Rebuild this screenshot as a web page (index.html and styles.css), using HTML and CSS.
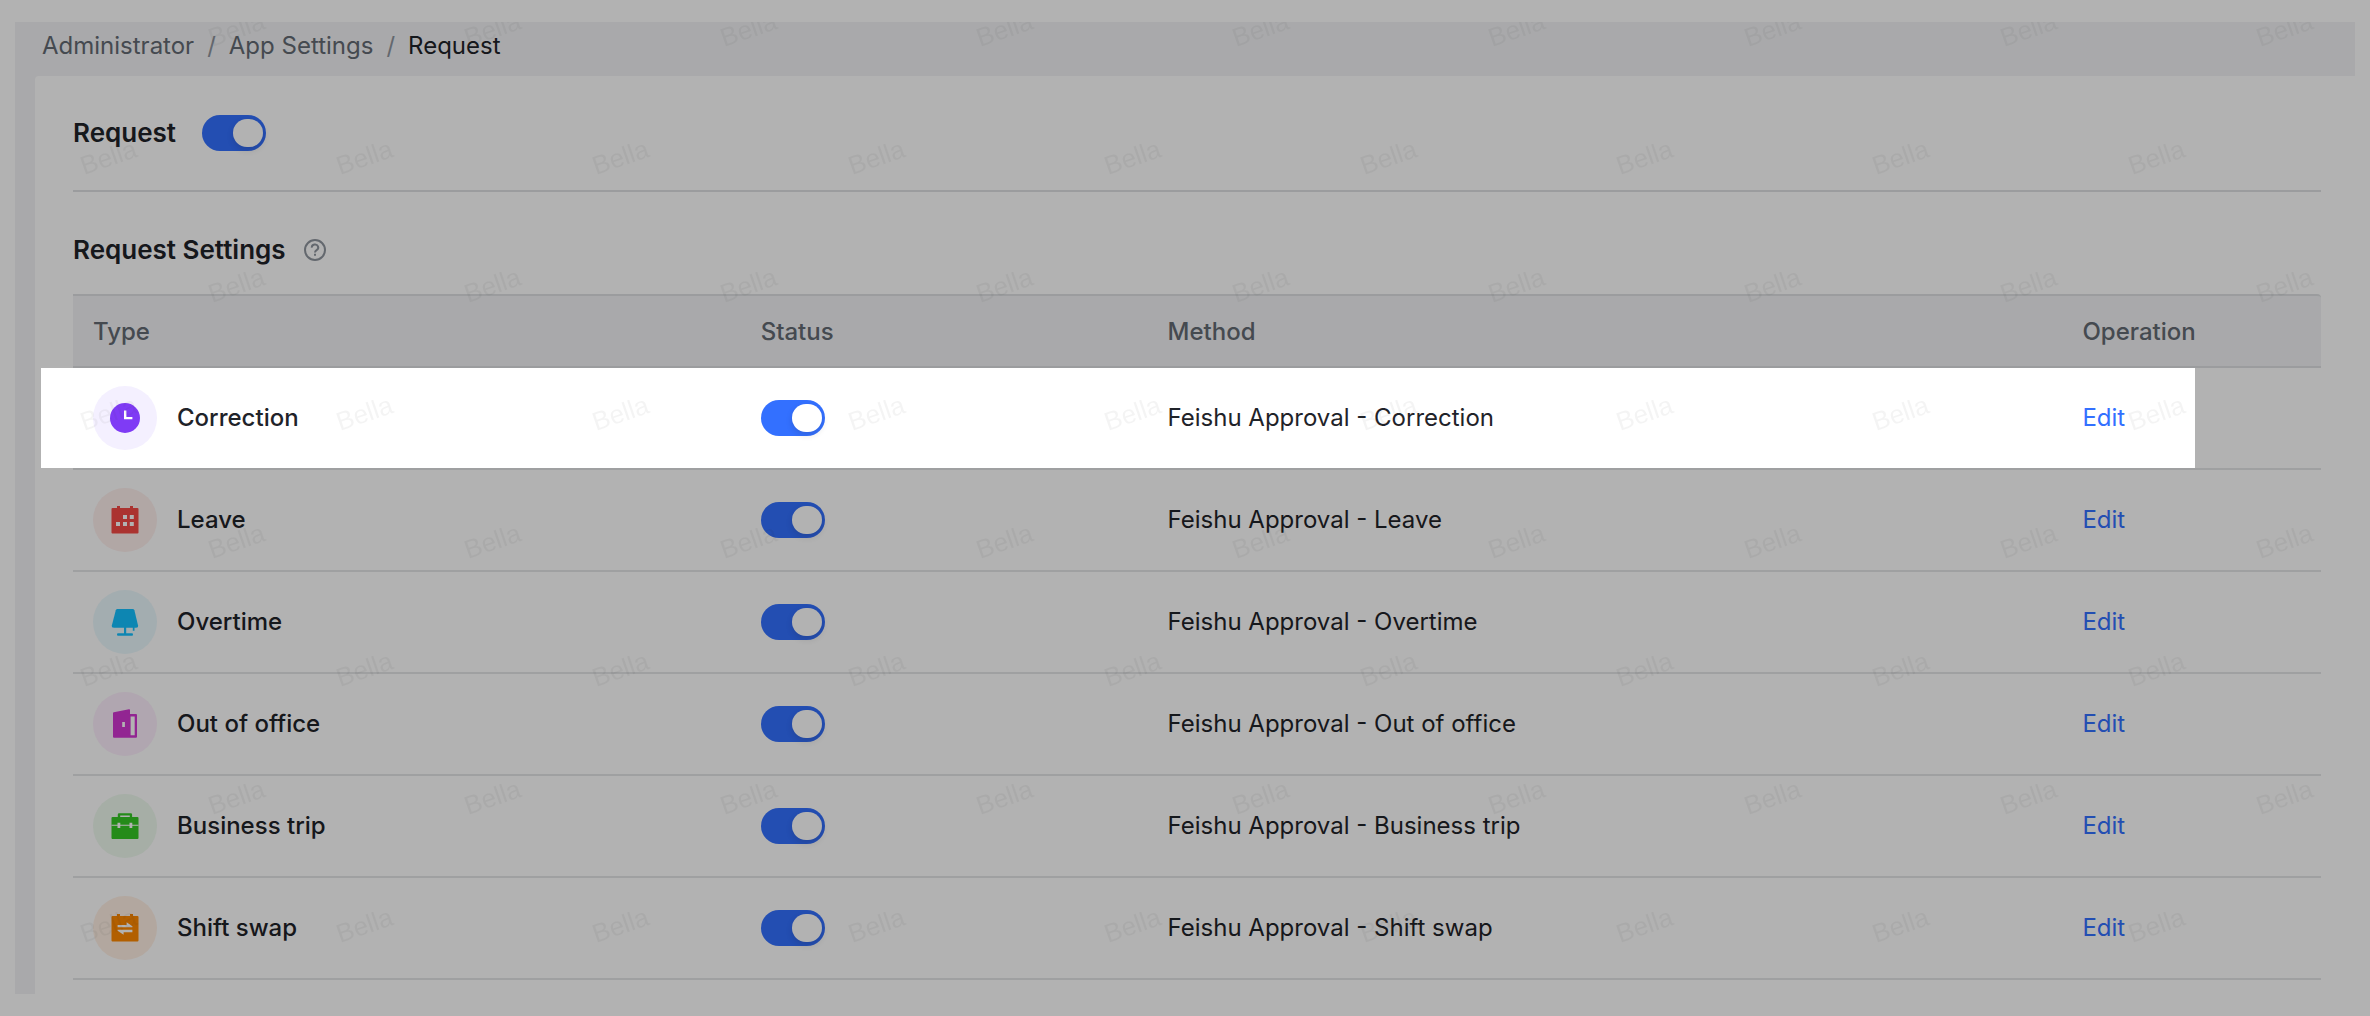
FILE: index.html
```
<!DOCTYPE html>
<html lang="en">
<head>
  <meta charset="UTF-8">
  <meta name="viewport" content="width=device-width, initial-scale=1.0">
  <title>Request</title>
  <link rel="stylesheet" href="styles.css">
</head>
<body>
  <div class="app">
    <nav class="breadcrumb" aria-label="Breadcrumb">
      <a href="#">Administrator</a>
      <span class="separator">/</span>
      <a href="#">App Settings</a>
      <span class="separator">/</span>
      <span class="current">Request</span>
    </nav>

    <main class="panel">
      <div class="request-header">
        <label class="title" for="requestSwitch">Request</label>
        <input class="switch" id="requestSwitch" type="checkbox" role="switch" checked>
      </div>

      <div class="settings-header">
        <h2 class="title">Request Settings</h2>
        <button class="help" type="button" aria-label="Help">
          <svg width="22" height="22" viewBox="0 0 22 22" fill="none" stroke="currentColor" stroke-width="2">
            <circle cx="11" cy="11" r="10"/>
            <path d="M7.800 8.600a3.200 3 0 1 1 4.800 2.500c-1.100.7-1.600 1.100-1.600 2.300"/>
            <path d="M11 14.700v2"/>
          </svg>
        </button>
      </div>

      <table class="request-table">
        <thead>
          <tr>
            <th class="col-type">Type</th>
            <th class="col-status">Status</th>
            <th class="col-method">Method</th>
            <th>Operation</th>
          </tr>
        </thead>
        <tbody>
          <tr class="highlighted">
            <td>
              <label class="type" for="correction">
                <svg class="icon purple" viewBox="0 0 64 64">
                  <circle cx="32" cy="32" r="15"/>
                  <path class="cutout" d="M31 24.5h2.4v6.4h6v2.4H31z"/>
                </svg>
                Correction
              </label>
            </td>
            <td><input class="switch" id="correction" type="checkbox" role="switch" checked></td>
            <td>Feishu Approval - Correction</td>
            <td>
              <a href="#">Edit</a>
              <span class="spotlight"></span>
            </td>
          </tr>
          <tr>
            <td>
              <label class="type" for="leave">
                <svg class="icon red" viewBox="0 0 64 64">
                  <path d="M24 20v-2h3v2h10v-2h3v2h4.500a1 1 0 0 1 1 1v23.500a1 1 0 0 1-1 1h-25a1 1 0 0 1-1-1V21a1 1 0 0 1 1-1z"/>
                  <path class="cutout" d="M30 27h4v4h-4zM36.800 27h4v4h-4zM23 34h4v4h-4zM30 34h4v4h-4zM36.800 34h4v4h-4z"/>
                </svg>
                Leave
              </label>
            </td>
            <td><input class="switch" id="leave" type="checkbox" role="switch" checked></td>
            <td>Feishu Approval - Leave</td>
            <td><a href="#">Edit</a></td>
          </tr>
          <tr>
            <td>
              <label class="type" for="overtime">
                <svg class="icon cyan" viewBox="0 0 64 64">
                  <path d="M24.500 19h15.200q1.300 0 1.700 1.300l3.600 15q.5 2.500-2 2.500H21q-2.700 0-2.100-2.500l3.900-15Q23.200 19 24.500 19z"/>
                  <path d="M31 37h2.200v6.300H39q1 0 1 1.200t-1 1.200H25q-1 0-1-1.200t1-1.200h6zM39.800 37h1.700v3.700h-1.700z"/>
                </svg>
                Overtime
              </label>
            </td>
            <td><input class="switch" id="overtime" type="checkbox" role="switch" checked></td>
            <td>Feishu Approval - Overtime</td>
            <td><a href="#">Edit</a></td>
          </tr>
          <tr>
            <td>
              <label class="type" for="outOfOffice">
                <svg class="icon magenta" viewBox="0 0 64 64">
                  <path d="M20.800 20.200 36 17.200q1-.2 1 .8v4h6q1 0 1 1v21.700q0 1-1 1H21q-1 0-1-1V21.200q0-.9.800-1z"/>
                  <path class="cutout" d="M37.600 24.600h4.100v18.600h-4.100zM29.200 30h2.700v5h-2.700z"/>
                </svg>
                Out of office
              </label>
            </td>
            <td><input class="switch" id="outOfOffice" type="checkbox" role="switch" checked></td>
            <td>Feishu Approval - Out of office</td>
            <td><a href="#">Edit</a></td>
          </tr>
          <tr>
            <td>
              <label class="type" for="businessTrip">
                <svg class="icon green" viewBox="0 0 64 64">
                  <path d="M24.800 23v-2.500q0-1.300 1.300-1.300h11.700q1.300 0 1.300 1.300V23h5.400q1 0 1 1v20q0 1-1 1h-25q-1 0-1-1V24q0-1 1-1z"/>
                  <path class="cutout" d="M27.200 21.600h9.600V23h-9.600zM18.500 30.800h6v-2.100h2.800v2.100h9.200v-2.100h2.800v2.100h6.200v1h-6.200v2.300h-2.800v-2.300h-9.200v2.300h-2.800v-2.300h-6z"/>
                </svg>
                Business trip
              </label>
            </td>
            <td><input class="switch" id="businessTrip" type="checkbox" role="switch" checked></td>
            <td>Feishu Approval - Business trip</td>
            <td><a href="#">Edit</a></td>
          </tr>
          <tr>
            <td>
              <label class="type" for="shiftSwap">
                <svg class="icon orange" viewBox="0 0 64 64">
                  <path d="M24 20v-2h3v2h10v-2h3v2h4.500a1 1 0 0 1 1 1v23.500a1 1 0 0 1-1 1h-25a1 1 0 0 1-1-1V21a1 1 0 0 1 1-1z"/>
                  <path class="cutout" d="M24.600 29h9v-2.800l5.800 4v1.100H24.600zM39.400 36.200h-8.800v2.600l-6-4v-1h14.800z"/>
                </svg>
                Shift swap
              </label>
            </td>
            <td><input class="switch" id="shiftSwap" type="checkbox" role="switch" checked></td>
            <td>Feishu Approval - Shift swap</td>
            <td><a href="#">Edit</a></td>
          </tr>
        </tbody>
      </table>
    </main>

    <!-- User name watermark -->
    <svg class="watermark" aria-hidden="true">
      <defs>
        <!-- the second name crosses the tile's edge, so it is drawn at both ends -->
        <pattern id="watermarkTile" width="256" height="256" patternUnits="userSpaceOnUse">
          <text transform="translate(69 153) rotate(-19)">Bella</text>
          <text transform="translate(197 25) rotate(-19)">Bella</text>
          <text transform="translate(197 281) rotate(-19)">Bella</text>
        </pattern>
      </defs>
      <rect width="100%" height="100%" fill="url(#watermarkTile)"/>
    </svg>
  </div>
</body>
</html>
```
FILE: styles.css
```
* {
  box-sizing: border-box;
}
body {
  margin: 0;
  min-height: 100vh;
  padding: 22px 15px;
  display: flex;
  background: #ffffff;
  color: #1f2329;
  font-family: Inter, "Liberation Sans", sans-serif;
  font-size: 24px;
  line-height: 32px;
  overflow-x: hidden;
}
a {
  color: #3370ff;
  text-decoration: none;
}
.app {
  position: relative;
  flex: 1;
  display: flex;
  flex-direction: column;
  padding-left: 20px;
  background: #f2f3f5;
}
.breadcrumb {
  display: flex;
  gap: 13px;
  padding: 8px 7px 14px;
}
.breadcrumb a {
  color: #646a73;
}
.breadcrumb .separator {
  color: #8f959e;
}
.panel {
  flex: 1;
  padding: 0 34px 14px 38px;
  background: #ffffff;
  border-top-left-radius: 4px;
}
.title {
  margin: 0;
  font-size: 26px;
  font-weight: 600;
  line-height: 32px;
}
.request-header {
  display: flex;
  align-items: center;
  gap: 26px;
  height: 116px;
  border-bottom: 2px solid #dee0e3;
}
.settings-header {
  display: flex;
  align-items: center;
  gap: 18px;
  padding: 42px 0 28px;
}
.help {
  display: flex;
  padding: 0;
  border: none;
  background: none;
  color: #8f959e;
  cursor: pointer;
}
/* On/off switch */
.switch {
  appearance: none;
  display: flex;
  align-items: center;
  justify-content: flex-end;
  width: 64px;
  height: 36px;
  margin: 0;
  padding: 0 3px;
  border-radius: 18px;
  background: #3370ff;
  cursor: pointer;
}
.switch::before {
  content: "";
  width: 30px;
  height: 28px;
  border-radius: 14px;
  background: #ffffff;
  box-shadow: 0 3px 6px rgba(31, 35, 41, 0.15);
}
.switch:not(:checked) {
  justify-content: flex-start;
  background: #bbbfc4;
}
/* Request types */
.request-table {
  width: 100%;
  table-layout: fixed;
  border-spacing: 0;
}
.request-table th,
.request-table td {
  padding: 0 20px;
  border-bottom: 2px solid #e4e5e7;
  text-align: left;
}
.request-table th {
  height: 74px;
  padding-top: 2px;
  border-top: 2px solid #dee0e3;
  border-bottom-color: #dee0e3;
  background: #f2f3f5;
  color: #646a73;
  font-weight: 500;
}
.request-table th:last-child {
  border-top-right-radius: 4px;
}
.request-table td {
  height: 102px;
}
.col-type {
  width: 29.7%;
}
.col-status {
  width: 18.1%;
}
.col-method {
  width: 40.7%;
}
.type {
  display: flex;
  align-items: center;
  gap: 20px;
  font-weight: 500;
}
.icon {
  width: 64px;
  height: 64px;
  border-radius: 50%;
  fill: currentColor;
}
.icon .cutout {
  fill: #ffffff;
}
.purple {
  color: #7f3bf5;
  background: #f4f0ff;
}
.red {
  color: #f54a45;
  background: #feefed;
}
.cyan {
  color: #14c0ff;
  background: #eaf8fd;
}
.magenta {
  color: #d136d1;
  background: #fdeefc;
}
.green {
  color: #34c724;
  background: #eefaee;
}
.orange {
  color: #ff8800;
  background: #fff0e4;
}
.watermark {
  position: absolute;
  inset: 0;
  width: 100%;
  height: 100%;
  pointer-events: none;
}
.watermark text {
  fill: #1f2329;
  fill-opacity: 0.05;
  font-family: "Liberation Sans", sans-serif;
  font-size: 26px;
}
/* Lights up one row and dims everything around it */
.highlighted {
  position: relative;
}
.spotlight {
  position: absolute;
  z-index: 10;
  top: 0;
  right: 126px;
  bottom: 2px;
  left: -32px;
  box-shadow: 0 0 0 9999px rgba(0, 0, 0, 0.3);
  pointer-events: none;
}
```
